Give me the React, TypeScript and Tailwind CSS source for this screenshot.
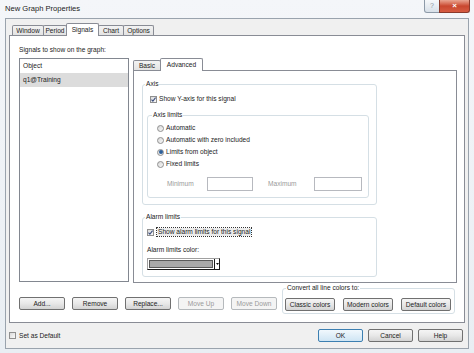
import type { ReactNode } from 'react'

// Win7 style "New Graph Properties" dialog, scaled down screenshot

function Tab({ children, w, sel, first }: { children: ReactNode; w: string; sel?: boolean; first?: boolean }) {
  const base = `${w} ${first ? '' : '-ml-px'} border border-b-0 border-[#898c95] rounded-t-[2px] flex items-center justify-center whitespace-nowrap`
  if (sel) return <div className={`${base} h-[13px] -mb-px relative z-10 bg-white`}>{children}</div>
  return <div className={`${base} h-[10px] bg-linear-to-b from-[#f3f3f3] to-[#e3e3e3]`}>{children}</div>
}

function Btn({ children, w = 'w-[46px]', disabled, primary }: { children: ReactNode; w?: string; disabled?: boolean; primary?: boolean }) {
  let cls = 'h-[13px] rounded-[2px] border flex items-center justify-center whitespace-nowrap shrink-0'
  if (disabled) cls += ' border-[#b5b9bc] bg-[#f4f4f4] text-[#9a9a9a]'
  else if (primary) cls += ' border-[#3c7fb1] bg-linear-to-b from-[#f1f8fd] to-[#cfe5f4]'
  else cls += ' border-[#707070] bg-linear-to-b from-[#f5f5f5] via-[#e8e8e8] to-[#d3d3d3]'
  return <div className={`${w} ${cls}`}>{children}</div>
}

function Check({ checked }: { checked?: boolean }) {
  return (
    <span className="w-[7px] h-[7px] border border-[#8f8f8f] bg-linear-to-br from-[#dadada] to-[#fafafa] flex items-center justify-center shrink-0">
      {checked && (
        <svg width="5" height="5" viewBox="0 0 5 5">
          <path d="M0.5 2.6 L1.9 4.1 L4.6 0.6" stroke="#3b4f80" strokeWidth="1.1" fill="none" />
        </svg>
      )}
    </span>
  )
}

function Radio({ on }: { on?: boolean }) {
  return (
    <span className="w-[7px] h-[7px] rounded-full border border-[#8f8f8f] bg-linear-to-br from-[#d8d8d8] to-[#f8f8f8] flex items-center justify-center shrink-0">
      {on && <span className="w-[4px] h-[4px] rounded-full bg-[#2c5f9a]" />}
    </span>
  )
}

function RadioRow({ label, on }: { label: string; on?: boolean }) {
  return (
    <div className="h-[8px] flex items-center gap-[2px]">
      <Radio on={on} />
      <span>{label}</span>
    </div>
  )
}

export default function App() {
  return (
    <div className="w-[474px] h-[353px] overflow-hidden bg-linear-to-b from-[#f4f6f9] to-[#e9eef3] text-[6.6px] leading-[8px] text-[#1b1b1b] font-['Liberation_Sans',Arial,sans-serif]">
      {/* title bar */}
      <div className="h-[18px] flex items-start justify-between pl-[5px] pr-[4px]">
        <div className="mt-[5px] text-[7.6px] leading-[8px] text-[#222]">New Graph Properties</div>
        <div className="flex">
          <div className="w-[16px] h-[13px] border border-t-0 border-[#8d9aa8] rounded-bl-[3px] bg-linear-to-b from-[#f6f8fa] to-[#d8e0e8] flex items-center justify-center text-[#8a96a3] text-[7px]">?</div>
          <div className="w-[31px] h-[13px] -ml-px border border-t-0 border-[#8a3a2c] rounded-br-[3px] bg-linear-to-b from-[#e9a592] via-[#c9472f] to-[#d65c42] flex items-center justify-center text-white text-[8px] font-bold">
            ×
          </div>
        </div>
      </div>

      {/* dialog client */}
      <div className="mx-[5px] h-[331px] border border-[#9aa3ad] bg-[#f0f0f0] flex flex-col px-[3px] pt-[4px]">
        <div className="flex items-end h-[12px] pl-[3px]">
          <Tab first w="w-[32px]">Window</Tab>
          <Tab w="w-[24px]">Period</Tab>
          <Tab sel w="w-[33px]">Signals</Tab>
          <Tab w="w-[26px]">Chart</Tab>
          <Tab w="w-[31px]">Options</Tab>
        </div>

        <div className="h-[288px] border border-[#898c95] bg-white flex flex-col pt-[10px] pl-[9px] pr-[7px]">
          <div>Signals to show on the graph:</div>

          <div className="flex items-start mt-[3px]">
            {/* list box */}
            <div className="mt-[1px] w-[110px] h-[224px] border border-[#828790] bg-white flex flex-col">
              <div className="h-[14px] pl-[3px] flex items-center">Object</div>
              <div className="h-[14px] pl-[3px] flex items-center bg-[#dcdcdc]">q1@Training</div>
            </div>

            {/* signal settings */}
            <div className="ml-[4px] w-[324px] flex flex-col">
              <div className="flex items-end h-[13px]">
                <Tab first w="w-[28px]">Basic</Tab>
                <Tab sel w="w-[43px]">Advanced</Tab>
              </div>
              <div className="h-[213px] border border-[#898c95] bg-white flex flex-col pt-[9px] pl-[8px]">
                <fieldset className="w-[235px] border border-[#d5dfe5] rounded-[3px] px-[4px] pr-[7px] pt-[7px] pb-[6px]">
                  <legend className="-ml-[2px] px-[1px] leading-[8px]">Axis</legend>
                  <div className="h-[8px] ml-[3px] flex items-center gap-[2px]">
                    <Check checked />
                    <span>Show Y-axis for this signal</span>
                  </div>
                  <fieldset className="mt-[8px] border border-[#d5dfe5] rounded-[3px] pl-[9px] pt-[5px] pb-[6px]">
                    <legend className="-ml-[5px] px-[1px] leading-[8px]">Axis limits</legend>
                    <div className="flex flex-col gap-[4px]">
                      <RadioRow label="Automatic" />
                      <RadioRow label="Automatic with zero included" />
                      <RadioRow label="Limits from object" on />
                      <RadioRow label="Fixed limits" />
                    </div>
                    <div className="mt-[9px] h-[14px] flex items-center text-[#9a9a9a]">
                      <span className="ml-[10px] w-[40px]">Minimum</span>
                      <span className="w-[46px] h-[14px] border border-[#b7b9bf] bg-white" />
                      <span className="ml-[15px] w-[46px]">Maximum</span>
                      <span className="w-[48px] h-[14px] border border-[#b7b9bf] bg-white" />
                    </div>
                  </fieldset>
                </fieldset>

                <fieldset className="mt-[8px] w-[235px] border border-[#d5dfe5] rounded-[3px] px-[4px] pt-[7px] pb-[6px]">
                  <legend className="-ml-[2px] px-[1px] leading-[8px]">Alarm limits</legend>
                  <div className="h-[8px] flex items-center gap-[3px]">
                    <Check checked />
                    <span className="outline outline-dotted outline-[#333] bg-[#ececec] px-[1px]">Show alarm limits for this signal</span>
                  </div>
                  <div className="mt-[10px]">Alarm limits color:</div>
                  <div className="mt-[4px] w-[73px] h-[12px] flex border-b border-r border-[#1a1a1a] border-t border-l border-t-[#a0a0a0] border-l-[#a0a0a0]">
                    <div className="w-[64px] m-[1px] border border-[#5a5a5a] bg-[#a9a9a9]" />
                    <div className="flex-1 flex items-center justify-center border-l border-[#1a1a1a]">
                      <svg width="3" height="2" viewBox="0 0 3 2">
                        <path d="M0 0 H3 L1.5 2 Z" fill="#111" />
                      </svg>
                    </div>
                  </div>
                </fieldset>
              </div>
            </div>
          </div>

          {/* list buttons + colour conversion */}
          <div className="flex items-start mt-[1px]">
            <div className="mt-[13px] flex gap-[7px]">
              <Btn>Add...</Btn>
              <Btn>Remove</Btn>
              <Btn>Replace...</Btn>
              <Btn disabled>Move Up</Btn>
              <Btn disabled>Move Down</Btn>
            </div>
            <fieldset className="ml-[5px] w-[173px] border border-[#d5dfe5] rounded-[3px] px-[2px] pt-[6px] pb-[2px]">
              <legend className="ml-[1px] px-[1px] leading-[8px]">Convert all line colors to:</legend>
              <div className="flex gap-[8px]">
                <Btn w="w-[50px]">Classic colors</Btn>
                <Btn w="w-[50px]">Modern colors</Btn>
                <Btn w="w-[50px]">Default colors</Btn>
              </div>
            </fieldset>
          </div>
        </div>

        {/* footer */}
        <div className="h-[25px] flex items-center justify-between pr-[2px]">
          <div className="flex items-center gap-[3px]">
            <Check />
            <span>Set as Default</span>
          </div>
          <div className="flex gap-[5px]">
            <Btn w="w-[45px]" primary>OK</Btn>
            <Btn w="w-[45px]">Cancel</Btn>
            <Btn w="w-[45px]">Help</Btn>
          </div>
        </div>
      </div>
    </div>
  )
}
